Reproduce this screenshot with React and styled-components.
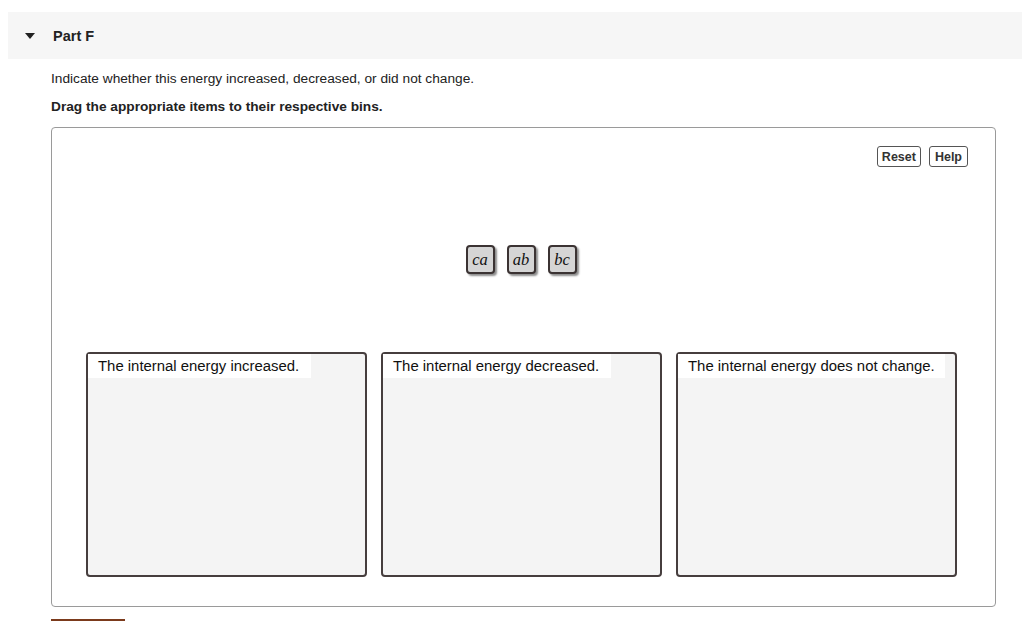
import React from "react";
import styled, { createGlobalStyle } from "styled-components";

const GlobalStyle = createGlobalStyle`
    body {
        margin: 0;
        background: #ffffff;
        font-family: "Liberation Sans", Arial, Helvetica, sans-serif;
        color: #222;
    }
`

const Page = styled.div`
    width: 1024px;
    height: 621px;
    overflow: hidden;
    padding-top: 12px;
    box-sizing: border-box;
`

const PartHeader = styled.div`
    margin: 0 2px 0 8px;
    height: 47px;
    background-color: #f6f6f6;
    display: flex;
    align-items: center;
    padding-left: 17px;
`

const Caret = styled.span`
    width: 0;
    height: 0;
    border-left: 5px solid transparent;
    border-right: 5px solid transparent;
    border-top: 6px solid #222;
    margin-right: 18px;
`

const PartTitle = styled.h3`
    margin: 0;
    font-size: 14.5px;
    font-weight: bold;
    color: #222;
`

const Content = styled.div`
    padding: 0 28px 0 51px;
`

const Prompt = styled.p`
    margin: 12px 0 0 0;
    font-size: 13.7px;
    line-height: 16px;
    font-weight: ${props => (props.bold ? "bold" : "normal")};
    &+& {
        margin-top: 12px;
    }
`

const DragBox = styled.div`
    margin-top: 12px;
    height: 480px;
    box-sizing: border-box;
    border: 1px solid #9a9a9a;
    border-radius: 4px;
    padding: 18px 27px 29px 34px;
    display: flex;
    flex-direction: column;
`

const Toolbar = styled.div`
    display: flex;
    justify-content: flex-end;
    gap: 8px;
`

const ToolButton = styled.button`
    height: 21px;
    padding: 0 ${props => props.pad}px;
    background: #fff;
    border: 1px solid #555;
    border-radius: 3px;
    font-family: "Liberation Sans", Arial, sans-serif;
    font-weight: bold;
    font-size: 12.5px;
    color: #333;
`

const TileRow = styled.div`
    margin-top: 78px;
    display: flex;
    justify-content: center;
    gap: 12px;
    padding-right: 12px;
`

const Tile = styled.div`
    width: 25px;
    height: 25px;
    background: #d5d5d5;
    border: 2px solid #3b3333;
    border-radius: 4px;
    box-shadow: 2px 2px 2px rgba(0, 0, 0, 0.45);
    display: flex;
    align-items: center;
    justify-content: center;
    font-family: "Liberation Serif", "Times New Roman", serif;
    font-style: italic;
    font-size: 16.5px;
    color: #111;
`

const BinRow = styled.div`
    margin-top: auto;
    display: flex;
    gap: 14px;
`

const Bin = styled.div`
    width: 281px;
    height: 225px;
    box-sizing: border-box;
    background: #f4f4f4;
    border: 2px solid #463e3e;
    border-radius: 4px;
`

const BinLabel = styled.div`
    display: inline-block;
    background: #ffffff;
    height: 24px;
    line-height: 24px;
    padding: 0 ${props => props.pad}px 0 10px;
    font-size: 14.9px;
    color: #111;
`

const BottomBar = styled.div`
    margin-top: 12px;
    width: 74px;
    height: 4px;
    background: #7b3a1c;
`

const tiles = ["ca", "ab", "bc"];
const bins = [
    { label: "The internal energy increased.", pad: 12 },
    { label: "The internal energy decreased.", pad: 12 },
    { label: "The internal energy does not change.", pad: 10 },
];

const App = () => {
    return (
        <Page>
            <GlobalStyle />
            <PartHeader>
                <Caret />
                <PartTitle>Part F</PartTitle>
            </PartHeader>
            <Content>
                <Prompt>Indicate whether this energy increased, decreased, or did not change.</Prompt>
                <Prompt bold>Drag the appropriate items to their respective bins.</Prompt>
                <DragBox>
                    <Toolbar>
                        <ToolButton pad={4}>Reset</ToolButton>
                        <ToolButton pad={5}>Help</ToolButton>
                    </Toolbar>
                    <TileRow>
                        {tiles.map(t => (
                            <Tile key={t}>{t}</Tile>
                        ))}
                    </TileRow>
                    <BinRow>
                        {bins.map(b => (
                            <Bin key={b.label}>
                                <BinLabel pad={b.pad}>{b.label}</BinLabel>
                            </Bin>
                        ))}
                    </BinRow>
                </DragBox>
                <BottomBar />
            </Content>
        </Page>
    )
}

export default App
